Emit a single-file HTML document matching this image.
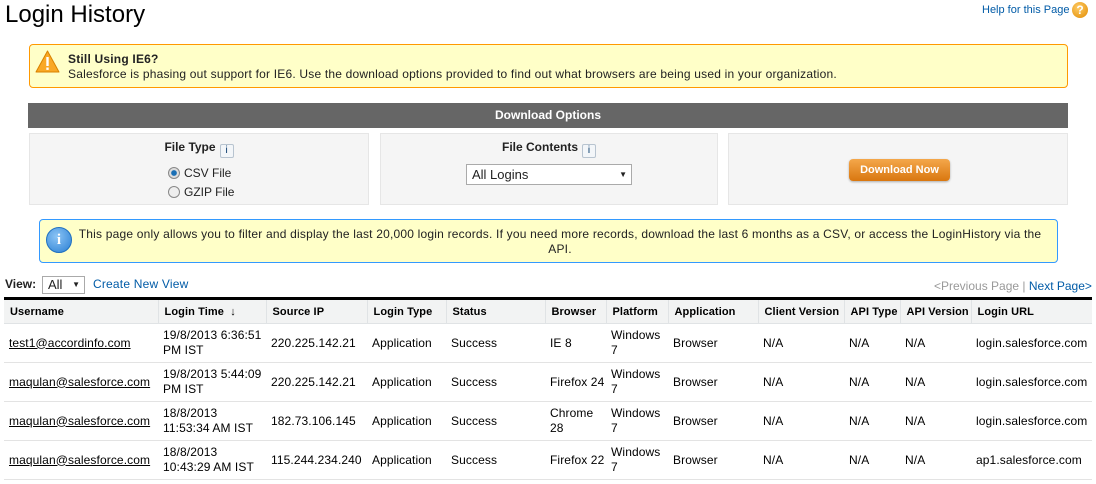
<!DOCTYPE html>
<html><head><meta charset="utf-8"><style>
*{margin:0;padding:0;box-sizing:border-box}
body{width:1096px;height:484px;overflow:hidden;background:#fff;font-family:"Liberation Sans",Arial,sans-serif;font-size:12px;color:#222;position:relative}
.a{position:absolute}
h1{position:absolute;left:5px;top:1px;font-size:24px;font-weight:normal;color:#000}
.help{left:982px;top:4px;color:#015ba7;font-size:11px}
.qi{left:1072px;top:2px;width:16px;height:16px;border-radius:50%;background:radial-gradient(circle at 40% 35%,#fc6,#e08a00);color:#fff;font-weight:bold;font-size:12px;text-align:center;line-height:16px}
.warn{left:29px;top:44px;width:1039px;height:44px;background:#ffffc8;border:1px solid #f90;border-radius:4px}
.dark{left:28px;top:103px;width:1040px;height:25px;background:#666;color:#fff;font-weight:bold;text-align:center;line-height:25px}
.panel{top:133px;height:72px;background:#f5f5f5;border:1px solid #e6e6e6}
.ib{display:inline-block;width:14px;height:14px;border:1px solid #b8c4d0;border-radius:2px;background:#f3f6f9;color:#036;font-size:10px;line-height:12px;text-align:center;font-weight:normal;vertical-align:-2px;margin-left:4px}
.radio{display:inline-block;width:12px;height:12px;border-radius:50%;border:1px solid #888;background:#eee;vertical-align:-2px;margin-right:4px}
.info{left:39px;top:219px;width:1019px;height:44px;background:#ffffc8;border:1px solid #39f;border-radius:4px}
table{position:absolute;left:4px;top:297px;width:1088px;border-collapse:collapse;border-top:3px solid #000;table-layout:fixed}
th{background:#f2f3f3;font-size:11px;font-weight:bold;text-align:left;height:25px;padding:0 2px 0 6px;border-left:1px solid #e0e3e5;border-bottom:1px solid #e0e3e5;color:#000;white-space:nowrap;letter-spacing:0.1px}
th:first-child{border-left:none}
td{height:39px;padding:0 1px 0 5px;border-bottom:1px solid #e3e3e3;vertical-align:middle;line-height:15px;font-size:12px;color:#000;letter-spacing:0.1px}
td u{color:#000}
.nw{white-space:nowrap}
.ls{letter-spacing:0.2px}
</style></head><body>
<h1>Login History</h1>
<div class="a help">Help for this Page</div>
<div class="a qi">?</div>
<div class="a warn">
<svg class="a" style="left:5px;top:5px" width="25" height="24" viewBox="0 0 25 24"><path d="M12.5 1 L24 22 H1 Z" fill="#f9a825" stroke="#d98200" stroke-linejoin="round"/><rect x="11.3" y="7" width="2.4" height="9" fill="#fff"/><rect x="11.3" y="17.5" width="2.4" height="2.4" fill="#fff"/></svg>
<div class="a ls" style="left:38px;top:7px;font-weight:bold;color:#222">Still Using IE6?</div>
<div class="a ls" style="left:38px;top:22px;white-space:nowrap">Salesforce is phasing out support for IE6. Use the download options provided to find out what browsers are being used in your organization.</div>
</div>
<div class="a dark">Download Options</div>
<div class="a panel" style="left:29px;width:340px">
<div class="a" style="left:0;width:338px;top:6px;text-align:center;font-weight:bold">File Type<span class="ib">i</span></div>
<div class="a" style="left:138px;top:32px"><span class="radio" style="background:radial-gradient(circle,#1a6fb5 35%,#ddd 45%)"></span>CSV File</div>
<div class="a" style="left:138px;top:51px"><span class="radio"></span>GZIP File</div>
</div>
<div class="a panel" style="left:380px;width:338px">
<div class="a" style="left:0;width:336px;top:6px;text-align:center;font-weight:bold">File Contents<span class="ib">i</span></div>
<div class="a" style="left:85px;top:30px;width:166px;height:21px;border:1px solid #aaa;background:#fff;font-size:13px;line-height:19px;padding-left:5px">All Logins<span class="a" style="right:4px;top:0;font-size:8px">▼</span></div>
</div>
<div class="a panel" style="left:728px;width:340px">
<div class="a" style="left:120px;top:25px;width:101px;height:22px;border-radius:4px;background:linear-gradient(#f4a74b,#d9770f);color:#fff;font-weight:bold;font-size:11px;text-align:center;line-height:22px;box-shadow:0 1px 2px rgba(0,0,0,.3)">Download Now</div>
</div>
<div class="a info">
<div class="a" style="left:6px;top:7px;width:26px;height:26px;border-radius:50%;background:radial-gradient(circle at 40% 35%,#8bc4f5,#2a7fd4);border:1px solid #2070c0;color:#fff;font-weight:bold;font-family:'Liberation Serif',serif;font-size:15px;text-align:center;line-height:24px">i</div>
<div class="a ls" style="left:30px;top:7px;width:980px;text-align:center;line-height:15px">This page only allows you to filter and display the last 20,000 login records. If you need more records, download the last 6 months as a CSV, or access the LoginHistory via the<br>API.</div>
</div>
<div class="a" style="left:5px;top:277px;font-weight:bold">View:</div>
<div class="a" style="left:42px;top:276px;width:43px;height:18px;border:1px solid #aaa;font-size:13px;line-height:16px;padding-left:5px">All<span class="a" style="right:4px;top:0;font-size:8px">▼</span></div>
<div class="a ls" style="left:93px;top:277px;color:#015ba7">Create New View</div>
<div class="a" style="left:934px;top:279px;color:#999">&lt;Previous Page <span style="color:#999">|</span> <span style="color:#015ba7">Next Page&gt;</span></div>
<table>
<colgroup><col style="width:154px"><col style="width:108px"><col style="width:101px"><col style="width:79px"><col style="width:99px"><col style="width:61px"><col style="width:62px"><col style="width:90px"><col style="width:86px"><col style="width:56px"><col style="width:71px"><col style="width:121px"></colgroup>
<tr><th>Username</th><th>Login Time &nbsp;<span style="font-weight:normal">↓</span></th><th>Source IP</th><th>Login Type</th><th>Status</th><th>Browser</th><th>Platform</th><th>Application</th><th>Client Version</th><th>API Type</th><th>API Version</th><th>Login URL</th></tr>
<tr><td><u>test1@accordinfo.com</u></td><td><span class="nw">19/8/2013 6:36:51</span> PM IST</td><td>220.225.142.21</td><td>Application</td><td>Success</td><td>IE 8</td><td>Windows 7</td><td>Browser</td><td>N/A</td><td>N/A</td><td>N/A</td><td>login.salesforce.com</td></tr>
<tr><td><u>maqulan@salesforce.com</u></td><td><span class="nw">19/8/2013 5:44:09</span> PM IST</td><td>220.225.142.21</td><td>Application</td><td>Success</td><td class="nw">Firefox 24</td><td>Windows 7</td><td>Browser</td><td>N/A</td><td>N/A</td><td>N/A</td><td>login.salesforce.com</td></tr>
<tr><td><u>maqulan@salesforce.com</u></td><td>18/8/2013<br>11:53:34 AM IST</td><td>182.73.106.145</td><td>Application</td><td>Success</td><td>Chrome 28</td><td>Windows 7</td><td>Browser</td><td>N/A</td><td>N/A</td><td>N/A</td><td>login.salesforce.com</td></tr>
<tr><td><u>maqulan@salesforce.com</u></td><td>18/8/2013<br>10:43:29 AM IST</td><td class="nw">115.244.234.240</td><td>Application</td><td>Success</td><td class="nw">Firefox 22</td><td>Windows 7</td><td>Browser</td><td>N/A</td><td>N/A</td><td>N/A</td><td>ap1.salesforce.com</td></tr>
</table>
</body></html>
